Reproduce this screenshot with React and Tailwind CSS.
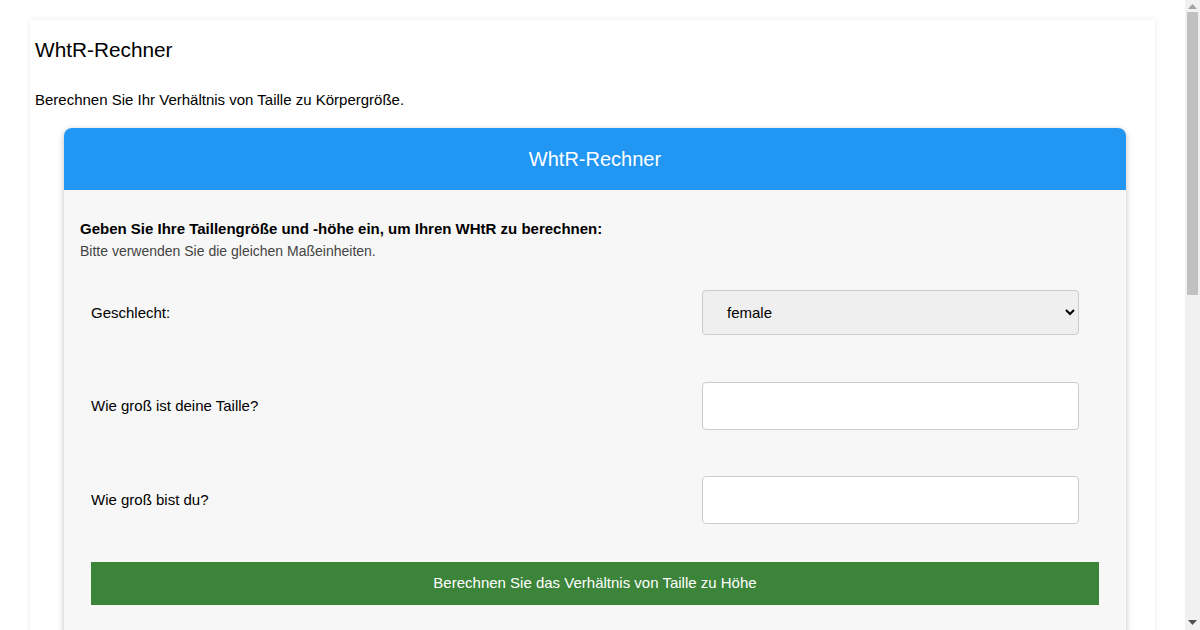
const FIELDS = [
  { key: "gender", label: "Geschlecht:", type: "select", row: "h-[93px]" },
  { key: "waist", label: "Wie groß ist deine Taille?", type: "input", row: "h-[93px]" },
  { key: "height", label: "Wie groß bist du?", type: "input", row: "h-[95px]" },
];

function Scrollbar() {
  return (
    <div className="w-[15px] h-full bg-[#f1f1f1] flex flex-col items-center">
      {/* up arrow */}
      <div className="h-[12px] flex items-center justify-center">
        <svg width="9" height="5" viewBox="0 0 9 5"><path d="M0 5 L4.5 0 L9 5 Z" fill="#a3a3a3" /></svg>
      </div>
      <div className="w-[11px] h-[283px] bg-[#c1c1c1]" />
      <div className="flex-1" />
      {/* down arrow */}
      <div className="h-[15px] flex items-center justify-center">
        <svg width="9" height="5" viewBox="0 0 9 5"><path d="M0 0 L9 0 L4.5 5 Z" fill="#505050" /></svg>
      </div>
    </div>
  );
}

export default function App() {
  return (
    <div className="h-[630px] flex overflow-hidden bg-white font-['Liberation_Sans',Arial,sans-serif] text-black">
      <div className="w-[1185px] h-full overflow-hidden pt-5">
        <div className="w-[1125px] min-h-[1310px] mx-auto bg-white shadow-[0_0_6px_rgba(0,0,0,0.08)] px-[5px] pt-[18px]">
          {/* Page heading */}
          <h1 className="text-[20.8px] leading-[24px]">WhtR-Rechner</h1>
          <p className="mt-[29px] text-[15px] leading-[18px]">
            Berechnen Sie Ihr Verhältnis von Taille zu Körpergröße.
          </p>

          {/* Calculator card */}
          <div className="mt-[19px] ml-[29px] w-[1062px] rounded-t-lg bg-[#f7f7f7] shadow-[0_2px_6px_rgba(0,0,0,0.25)] pb-[400px]">
            <div className="h-[62px] rounded-t-lg bg-[#2196f3] flex items-center justify-center">
              <h2 className="text-white text-[20px] leading-[24px]">WhtR-Rechner</h2>
            </div>

            <div className="px-4 pt-[30px]">
              <p className="text-[15px] leading-[18px] font-bold">
                Geben Sie Ihre Taillengröße und -höhe ein, um Ihren WHtR zu berechnen:
              </p>
              <p className="mt-[4px] text-[14px] leading-[18px] text-[#444]">
                Bitte verwenden Sie die gleichen Maßeinheiten.
              </p>

              <div className="mt-[6px] px-[11px]">
                {FIELDS.map(({ key, label, type, row }) => (
                  <div key={key} className={`flex items-center ${row}`}>
                    <label className="flex-1 text-[15px] pt-[2px]">{label}</label>
                    {type === "select" ? (
                      <select
                        defaultValue="female"
                        className="w-[377px] h-[45px] mr-[20px] pl-[20px] pr-2 text-[15px] bg-[#efefef] border border-[#ccc] rounded"
                      >
                        <option value="female">female</option>
                        <option value="male">male</option>
                      </select>
                    ) : (
                      <input
                        type="text"
                        className="w-[377px] h-[48px] mr-[20px] px-3 text-[15px] bg-white border border-[#ccc] rounded"
                      />
                    )}
                  </div>
                ))}

                <button className="mt-[15px] w-full h-[43px] bg-[#3b843a] text-white text-[15px]">
                  Berechnen Sie das Verhältnis von Taille zu Höhe
                </button>
              </div>
            </div>
          </div>
        </div>
      </div>
      <Scrollbar />
    </div>
  );
}
